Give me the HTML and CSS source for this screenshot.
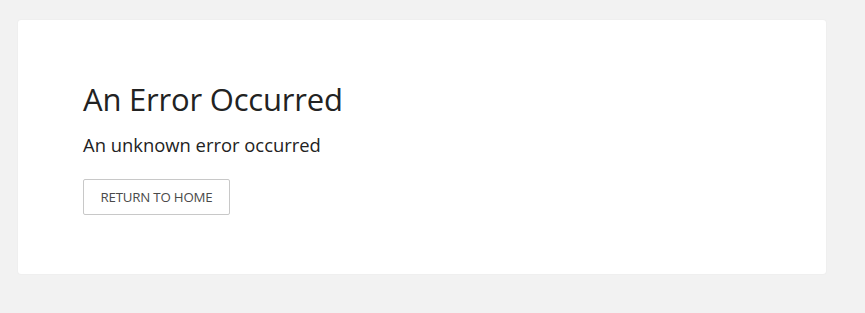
FILE: index.html
```html
<!DOCTYPE html>
<html>
<head>
<meta charset="utf-8">
<link rel="stylesheet" href="styles.css">
</head>
<body>
<div class="page">
  <div class="card">
    <h1 class="title">An Error Occurred</h1>
    <p class="message">An unknown error occurred</p>
    <button class="btn">RETURN TO HOME</button>
  </div>
</div>
</body>
</html>
```
FILE: styles.css
```css
html, body {
  margin: 0;
  padding: 0;
  background: #f2f2f2;
  font-family: "Open Sans", "Noto Sans", sans-serif;
}
.page {
  padding: 20px 39px 39px 18px;
}
.card {
  background: #fff;
  border-radius: 3px;
  box-shadow: 0 0 2px rgba(0,0,0,0.06);
  height: 254px;
  box-sizing: border-box;
  padding: 59px 65px 0 65px;
}
.title {
  margin: 0;
  font-size: 31px;
  font-weight: 400;
  line-height: 40px;
  color: #222;
  letter-spacing: -0.2px;
}
.message {
  margin: 0;
  margin-top: 13px;
  font-size: 18.4px;
  line-height: 26px;
  color: #222;
}
.btn {
  display: block;
  margin-top: 21px;
  width: 147px;
  height: 36px;
  background: #fff;
  border: 1px solid #c8c8c8;
  border-radius: 2px;
  font-family: "Open Sans", "Noto Sans", sans-serif;
  font-size: 13.3px;
  color: #4a4a4a;
  padding: 0;
  letter-spacing: -0.2px;
}
```
